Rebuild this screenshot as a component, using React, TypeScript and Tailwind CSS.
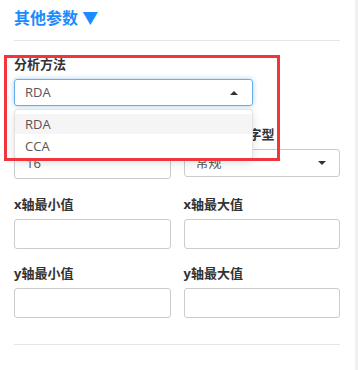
import React from "react";

const font = { fontFamily: '"Open Sans","Noto Sans CJK SC",sans-serif' };

function Field({ label, value, select }: { label: string; value?: string; select?: boolean }) {
  return (
    <div>
      <div className="h-[18px] leading-[18px] text-[13px] font-bold text-[#333] whitespace-nowrap">{label}</div>
      {select ? (
        <div className="mt-[6px] h-[28px] border border-[#ccc] rounded-[3px] flex items-center justify-between pl-[11px] pr-[13px] text-[13px] text-[#555]">
          <span>{value}</span>
          <span className="w-0 h-0 border-x-[4px] border-x-transparent border-t-[4px] border-t-[#333]" />
        </div>
      ) : (
        <div className="mt-[6px] h-[30px] border border-[#ccc] rounded-[3px] flex items-center pl-[11px] text-[13px] text-[#555]">
          {value}
        </div>
      )}
    </div>
  );
}

export default function App() {
  return (
    <div className="relative w-[358px] h-[370px] bg-white overflow-hidden flex" style={font}>
      <div className="w-[355px] pl-[14px] pr-[15px]">
        <div className="pt-[6px] h-[30px] leading-[24px] text-[16px] font-bold text-[#1a8cff]">其他参数 ▼</div>
        <div className="mt-[10px] h-px bg-[#e5e5e5]" />

        {/* 分析方法 */}
        <div className="mt-[14px]">
          <div className="h-[18px] leading-[18px] text-[13px] font-bold text-[#333]">分析方法</div>
          <div className="mt-[6px] w-[239px] h-[27px] border border-[#66afe9] rounded-[3px] shadow-[0_0_5px_rgba(102,175,233,0.6)] flex items-center justify-between pl-[10px] pr-[14px] text-[13px] text-[#555]">
            <span>RDA</span>
            <span className="w-0 h-0 border-x-[4px] border-x-transparent border-b-[4px] border-b-[#333]" />
          </div>
        </div>

        <div className="mt-[19px] grid grid-cols-2 gap-x-[13px]">
          <Field label="字体大小" value="16" />
          <Field label="坐标轴标签字型" value="常规" select />
        </div>
        <div className="mt-[16px] grid grid-cols-2 gap-x-[13px]">
          <Field label="x轴最小值" />
          <Field label="x轴最大值" />
        </div>
        <div className="mt-[15px] grid grid-cols-2 gap-x-[13px]">
          <Field label="y轴最小值" />
          <Field label="y轴最大值" />
        </div>
        <div className="mt-[26px] h-px bg-[#e5e5e5]" />
      </div>
      <div className="w-[3px] h-full bg-[#f1f1f1]" />

      {/* open dropdown menu */}
      <div className="absolute left-[14px] top-[109px] w-[239px] h-[50px] bg-white border border-[#e3e3e3] rounded-[3px] shadow-[0_4px_10px_rgba(0,0,0,0.12)] pt-[4px] text-[13px] text-[#555]">
        <div className="h-[20px] leading-[20px] pl-[10px] bg-[#f5f5f5]">RDA</div>
        <div className="h-[22px] leading-[24px] pl-[10px]">CCA</div>
      </div>

      {/* highlight box */}
      <div className="absolute left-[4px] top-[55px] w-[276px] h-[106px] border-[3px] border-[#f2353b] pointer-events-none" />
    </div>
  );
}
